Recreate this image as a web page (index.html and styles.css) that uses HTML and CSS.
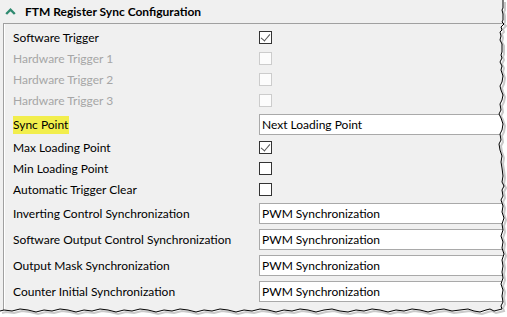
FILE: index.html
```html
<!DOCTYPE html>
<html lang="en">
<head>
    <meta charset="UTF-8">
    <title>FTM Register Sync Configuration</title>
    <link rel="stylesheet" href="styles.css">
</head>
<body>
    <div class="section">
        <div class="section-head">
            <svg class="chevron" width="11" height="7" viewBox="0 0 11 7">
                <path d="M1.2 6 L5.5 1.7 L9.8 6" fill="none" stroke="#2f8a70" stroke-width="2.4"/>
            </svg>
            <span class="section-title">FTM Register Sync Configuration</span>
        </div>

        <div class="section-body">
            <div class="row check-row">
                <span class="label">Software Trigger</span>
                <span class="checkbox checked"></span>
            </div>
            <div class="row check-row disabled">
                <span class="label">Hardware Trigger 1</span>
                <span class="checkbox"></span>
            </div>
            <div class="row check-row disabled">
                <span class="label">Hardware Trigger 2</span>
                <span class="checkbox"></span>
            </div>
            <div class="row check-row disabled">
                <span class="label">Hardware Trigger 3</span>
                <span class="checkbox"></span>
            </div>
            <div class="row input-row">
                <span class="label"><mark class="highlight">Sync Point</mark></span>
                <div class="field">Next Loading Point</div>
            </div>
            <div class="row check-row">
                <span class="label">Max Loading Point</span>
                <span class="checkbox checked"></span>
            </div>
            <div class="row check-row">
                <span class="label">Min Loading Point</span>
                <span class="checkbox"></span>
            </div>
            <div class="row check-row">
                <span class="label">Automatic Trigger Clear</span>
                <span class="checkbox"></span>
            </div>
            <div class="row input-row">
                <span class="label">Inverting Control Synchronization</span>
                <div class="field">PWM Synchronization</div>
            </div>
            <div class="row input-row">
                <span class="label">Software Output Control Synchronization</span>
                <div class="field">PWM Synchronization</div>
            </div>
            <div class="row input-row">
                <span class="label">Output Mask Synchronization</span>
                <div class="field">PWM Synchronization</div>
            </div>
            <div class="row input-row">
                <span class="label">Counter Initial Synchronization</span>
                <div class="field">PWM Synchronization</div>
            </div>
        </div>
    </div>

    <!-- torn paper edge drawn over the screenshot -->
    <svg class="torn-edge" width="507" height="317" viewBox="0 0 507 317">
        <polygon fill="#ffffff" points="503,0 503,8 502,10 503,14 503,20 502,22 504,24 501,27 502,30 500,32 501,36 500,40 502,44 502,52 501,55 502,58 500,62 502,66 501,70 503,76 502,82 500,86 501,90 503,95 502,100 500,104 501,110 499,114 501,118 503,124 502,130 500,134 501,140 499,144 500,150 502,156 501,162 502,168 503,176 502,182 504,186 502,190 503,196 501,200 503,206 502,212 504,218 502,224 503,230 501,236 503,242 502,248 504,254 502,260 503,266 502,272 503,278 501,284 503,290 502,296 503,302 501,306 502,309 498,310 494,311 490,309 486,310 480,312 474,311 468,309 460,310 452,311 444,309 436,310 428,312 420,310 412,309 404,311 396,310 388,312 380,310 372,309 364,311 356,310 348,312 340,311 332,309 324,310 316,312 308,310 300,309 292,311 284,310 276,312 268,310 260,309 252,311 244,310 236,312 228,310 220,309 212,311 204,310 196,312 188,310 180,309 172,311 164,310 156,312 148,310 140,309 132,311 124,310 116,312 108,310 100,309 92,311 84,310 76,312 68,310 60,309 52,311 44,310 36,312 28,310 20,309 12,311 4,310 0,311 0,317 507,317 507,0"/>
        <polyline fill="none" stroke="#c9c9c9" stroke-width="2" transform="translate(2,2)" points="503,0 503,8 502,10 503,14 503,20 502,22 504,24 501,27 502,30 500,32 501,36 500,40 502,44 502,52 501,55 502,58 500,62 502,66 501,70 503,76 502,82 500,86 501,90 503,95 502,100 500,104 501,110 499,114 501,118 503,124 502,130 500,134 501,140 499,144 500,150 502,156 501,162 502,168 503,176 502,182 504,186 502,190 503,196 501,200 503,206 502,212 504,218 502,224 503,230 501,236 503,242 502,248 504,254 502,260 503,266 502,272 503,278 501,284 503,290 502,296 503,302 501,306 502,309 498,310 494,311 490,309 486,310 480,312 474,311 468,309 460,310 452,311 444,309 436,310 428,312 420,310 412,309 404,311 396,310 388,312 380,310 372,309 364,311 356,310 348,312 340,311 332,309 324,310 316,312 308,310 300,309 292,311 284,310 276,312 268,310 260,309 252,311 244,310 236,312 228,310 220,309 212,311 204,310 196,312 188,310 180,309 172,311 164,310 156,312 148,310 140,309 132,311 124,310 116,312 108,310 100,309 92,311 84,310 76,312 68,310 60,309 52,311 44,310 36,312 28,310 20,309 12,311 4,310 0,311"/>
        <polyline fill="none" stroke="#000000" stroke-width="1" points="503,0 503,8 502,10 503,14 503,20 502,22 504,24 501,27 502,30 500,32 501,36 500,40 502,44 502,52 501,55 502,58 500,62 502,66 501,70 503,76 502,82 500,86 501,90 503,95 502,100 500,104 501,110 499,114 501,118 503,124 502,130 500,134 501,140 499,144 500,150 502,156 501,162 502,168 503,176 502,182 504,186 502,190 503,196 501,200 503,206 502,212 504,218 502,224 503,230 501,236 503,242 502,248 504,254 502,260 503,266 502,272 503,278 501,284 503,290 502,296 503,302 501,306 502,309 498,310 494,311 490,309 486,310 480,312 474,311 468,309 460,310 452,311 444,309 436,310 428,312 420,310 412,309 404,311 396,310 388,312 380,310 372,309 364,311 356,310 348,312 340,311 332,309 324,310 316,312 308,310 300,309 292,311 284,310 276,312 268,310 260,309 252,311 244,310 236,312 228,310 220,309 212,311 204,310 196,312 188,310 180,309 172,311 164,310 156,312 148,310 140,309 132,311 124,310 116,312 108,310 100,309 92,311 84,310 76,312 68,310 60,309 52,311 44,310 36,312 28,310 20,309 12,311 4,310 0,311"/>
    </svg>
</body>
</html>
```

FILE: styles.css
```css
:root {
    --panel-bg: #f0f0f0;
    --line-color: #a0a0a0;
    --text-color: #000;
    --disabled-color: #a6a6a6;
    --accent-color: #2f8a70;
}

* {
    margin: 0;
    padding: 0;
    box-sizing: border-box;
}

body {
    font-family: Lato, "Open Sans", sans-serif;
    font-size: 12px;
    color: var(--text-color);
    background-color: #fff;
    width: 507px;
    height: 317px;
    overflow: hidden;
}

.section {
    background-color: var(--panel-bg);
    height: 317px;
}

.section-head {
    display: flex;
    align-items: center;
    height: 23px;
    padding-left: 5px;
}

.chevron {
    margin-right: 9px;
    margin-top: -1px;
}

.section-title {
    font-weight: 700;
    font-size: 12px;
}

.section-body {
    margin-left: 3px;
    border-top: 1px solid var(--line-color);
    border-left: 1px solid var(--line-color);
    box-shadow: inset 1px 0 #fff;
    padding: 3px 0 0 9px;
    height: 294px;
}

.row {
    display: grid;
    grid-template-columns: 246px 1fr;
    align-items: center;
}

.check-row {
    height: 21px;
}

.input-row {
    height: 26px;
}

.label {
    white-space: nowrap;
}

.highlight {
    background-color: #f2ee4d;
    color: inherit;
    padding: 1px 1px 2px 0;
}

.checkbox {
    width: 13px;
    height: 13px;
    border: 1px solid #333;
    background-color: #fff;
    position: relative;
}

.checkbox.checked::after {
    content: "";
    position: absolute;
    left: 3px;
    top: 0px;
    width: 4px;
    height: 8px;
    border-right: 1px solid #555;
    border-bottom: 1px solid #555;
    transform: rotate(40deg);
}

.disabled .label {
    color: var(--disabled-color);
}

.disabled .checkbox {
    border-color: #cccccc;
    background-color: #fcfcfc;
}

.field {
    height: 21px;
    line-height: 19px;
    border: 1px solid #a9a9a9;
    background-color: #fff;
    padding-left: 2px;
    white-space: nowrap;
}

.torn-edge {
    position: fixed;
    top: 0;
    left: 0;
}
```
